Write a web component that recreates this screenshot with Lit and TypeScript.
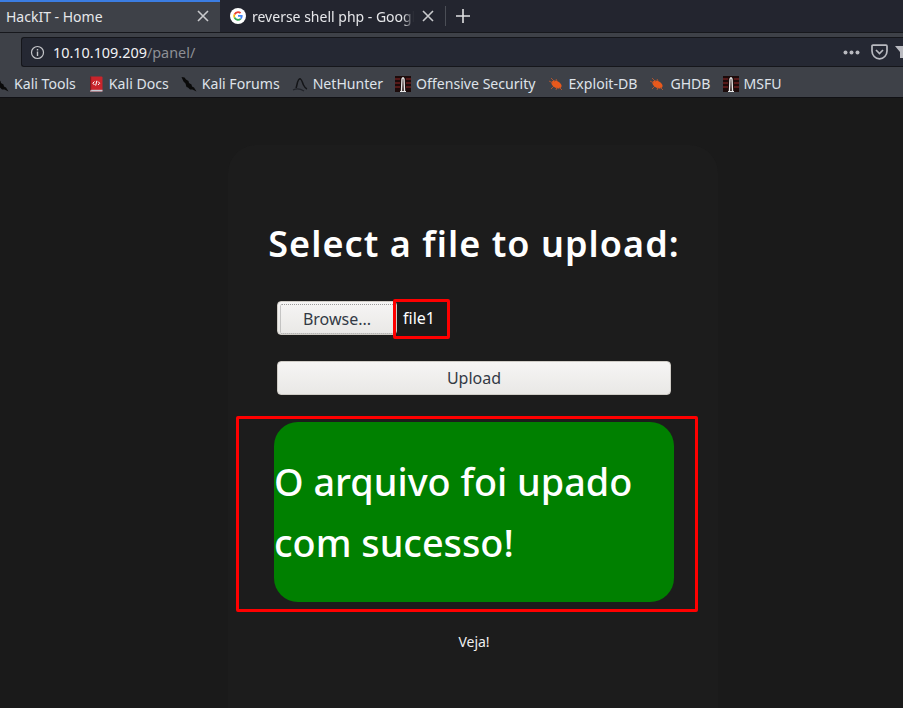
import { LitElement, html, css, svg } from "lit";
import { customElement } from "lit/decorators.js";

const dragon = svg`<path d="M0.5 1 L3.5 1.5 L5 3.5 L7.5 5 L8 7 L10.5 8.5 L11 10.5 L13 11.5 L15.5 15.5 L11.5 13.5 L9 13.5 L7 11.5 L5.5 11 L4.5 7.5 L2.5 5.5 Z" fill="#0a0a0a"/>`;
const book = svg`<rect x="2" y="0.5" width="12.5" height="15" rx="1" fill="#c9242b"/><rect x="2" y="13.8" width="12.5" height="1.7" fill="#c7ccd6"/><rect x="2" y="0.5" width="1.2" height="14" fill="#7d1a20"/><path d="M6.5 5.5 L4.8 7.2 L6.5 9 M10 5.5 L11.7 7.2 L10 9 M8.8 4.8 L7.7 9.6" stroke="#fff" stroke-width="1" fill="none"/>`;
const net = svg`<path d="M4 12 C5 10 5 7 6 5 C6.5 3.5 7.5 2.5 8.5 3 C10 4 10.5 7 11.5 9 C12.5 11 13.5 12.5 15 13" stroke="#141518" stroke-width="1.5" fill="none"/><path d="M1 14 C4 12.5 8 12.5 12 15" stroke="#22242a" stroke-width="1.3" fill="none"/>`;
const offsec = svg`<rect width="16" height="16" fill="#1c0b0b"/><path d="M0 3 H5 M11 3 H16 M0 7 H5 M11 7 H16 M0 11 H5 M11 11 H16" stroke="#6a1f1f" stroke-width="1.4"/><path d="M6.5 15 L7 3 Q8 0.5 9 3 L9.5 15" stroke="#e8e8e8" stroke-width="1.4" fill="none"/><path d="M5 15.5 H11" stroke="#e8e8e8"/>`;
const bug = svg`<ellipse cx="8.5" cy="8.5" rx="5.5" ry="3.4" transform="rotate(28 8.5 8.5)" fill="#e9591c"/><path d="M1 5 L5 7 M3 2 L7 6 M8 3 L9 5 M3 13 L6 10 M8 14 L9 11 M14 14 L11 11" stroke="#b9562d" stroke-width="0.9"/>`;

const marks = [
  { icon: dragon, label: "Kali Tools" },
  { icon: book, label: "Kali Docs" },
  { icon: dragon, label: "Kali Forums" },
  { icon: net, label: "NetHunter" },
  { icon: offsec, label: "Offensive Security" },
  { icon: bug, label: "Exploit-DB" },
  { icon: bug, label: "GHDB" },
  { icon: offsec, label: "MSFU" },
];

@customElement("app-root")
export class AppRoot extends LitElement {
  static styles = css`
    :host {
      display: flex;
      flex-direction: column;
      position: relative;
      width: 903px;
      height: 708px;
      overflow: hidden;
      background: #1a1a1a;
      font-family: "Noto Sans", "Open Sans", sans-serif;
    }
    .tabs {
      display: flex;
      align-items: stretch;
      height: 32px;
      flex: none;
      background: #23252f;
      color: #e6e7ea;
      font-size: 14px;
    }
    .tab {
      width: 220px;
      display: flex;
      align-items: center;
      flex: none;
      box-sizing: border-box;
      white-space: nowrap;
      overflow: hidden;
    }
    .tab.active {
      background: #3e4148;
      border-top: 2px solid #3b7de2;
      padding: 0 0 2px 6px;
    }
    .tab.other {
      padding: 0 0 0 10px;
      gap: 6px;
      width: 225px;
    }
    .label {
      flex: 1;
      min-width: 0;
      overflow: hidden;
    }
    .tab.other .label {
      -webkit-mask-image: linear-gradient(to right, #000 93%, transparent 100%);
      mask-image: linear-gradient(to right, #000 93%, transparent 100%);
    }
    .x {
      width: 16px;
      height: 16px;
      flex: none;
      margin-right: 9px;
    }
    .sep {
      width: 1px;
      height: 20px;
      align-self: center;
      background: #4b4e56;
      flex: none;
    }
    .plus {
      width: 14px;
      height: 14px;
      align-self: center;
      margin-left: 10px;
      flex: none;
    }
    .toolbar {
      flex: none;
      height: 35px;
      box-sizing: border-box;
      border-top: 1px solid #17181d;
      background: #3e4148;
      padding: 4px 0 0 21px;
      display: flex;
    }
    .url {
      flex: 1;
      display: flex;
      align-items: center;
      box-sizing: border-box;
      height: 30px;
      background: #252833;
      border: 1px solid #15161b;
      border-right: none;
      border-radius: 3px 0 0 3px;
      padding: 0 0 0 8px;
      font-size: 14.4px;
      color: #f2f2f4;
    }
    .info {
      width: 15px;
      height: 15px;
      flex: none;
      margin-right: 8px;
    }
    .path { color: #8d8f95; }
    .spacer { flex: 1; }
    .dots {
      width: 17px;
      height: 5px;
      flex: none;
      margin-right: 11px;
    }
    .pocket {
      width: 17px;
      height: 16px;
      flex: none;
      margin-right: 7px;
    }
    .funnel {
      width: 13px;
      height: 14px;
      flex: none;
      margin-right: -5px;
    }
    .marks {
      flex: none;
      height: 31px;
      box-sizing: border-box;
      background: #3e4148;
      border-bottom: 1px solid #101014;
      display: flex;
      align-items: center;
      gap: 12px;
      padding: 3px 0 0 0;
      margin-left: -7px;
      color: #dfe3ea;
      font-size: 14.1px;
    }
    .mark {
      display: flex;
      align-items: center;
      gap: 5px;
      white-space: nowrap;
    }
    .mark svg {
      width: 16px;
      height: 16px;
      flex: none;
    }
    main {
      flex: 1;
      display: flex;
      padding: 47px 0 0 228px;
      min-height: 0;
    }
    .card {
      width: 490px;
      background: #1c1c1c;
      border-radius: 28px 28px 0 0;
      display: flex;
      flex-direction: column;
      align-items: center;
      color: #fff;
      box-sizing: border-box;
      padding: 73px 0 0 2px;
    }
    h1 {
      margin: 0;
      font-size: 36px;
      line-height: 52px;
      font-weight: 600;
      letter-spacing: 1.05px;
      white-space: nowrap;
    }
    form {
      width: 394px;
      margin-top: 31px;
      display: flex;
      flex-direction: column;
      gap: 26px;
    }
    .file {
      display: flex;
      align-items: center;
      gap: 6px;
      height: 34px;
      font-size: 16px;
    }
    button {
      font: inherit;
      font-size: 16px;
      color: #333a45;
      background: linear-gradient(#f6f5f4, #e9e8e6);
      border: 1px solid #cfccc6;
      border-radius: 4px;
      height: 34px;
      padding: 0;
      box-sizing: border-box;
      display: block;
    }
    .browse {
      width: 120px;
      flex: none;
    }
    .browse span {
      display: flex;
      align-items: center;
      justify-content: center;
      margin: 2px;
      height: 28px;
      border: 1px dotted #9a9a9a;
      border-radius: 2px;
    }
    .upload { width: 394px; }
    .msg {
      width: 400px;
      height: 180px;
      margin-top: 27px;
      box-sizing: border-box;
      background: #008000;
      border-radius: 24px;
      padding: 29px 0 0 0;
      font-size: 37.8px;
      line-height: 61px;
      font-weight: 500;
    }
    .veja {
      margin-top: 30px;
      font-size: 14px;
      line-height: 19px;
      color: #f0f0f0;
    }
    .redbox {
      position: absolute;
      box-sizing: border-box;
      border: 3px solid #ff0000;
      border-radius: 2px;
      pointer-events: none;
    }
    .r1 { left: 393px; top: 299px; width: 57px; height: 40px; }
    .r2 { left: 236px; top: 416px; width: 462px; height: 196px; }
  `;

  render() {
    const x = html`<svg class="x" viewBox="0 0 16 16"><path d="M3 3 L13 13 M13 3 L3 13" stroke="#c9cacd" stroke-width="1.6"/></svg>`;
    return html`
      <div class="tabs">
        <div class="tab active"><span class="label">HackIT - Home</span>${x}</div>
        <div class="tab other">
          <svg width="16" height="16" viewBox="0 0 16 16" style="flex:none">
            <circle cx="8" cy="8" r="8" fill="#fff"/>
            <path d="M8 3.3 A4.7 4.7 0 0 1 11.2 4.5 L9.9 5.8 A3 3 0 0 0 5.2 7 L3.7 5.9 A4.7 4.7 0 0 1 8 3.3Z" fill="#ea4335"/>
            <path d="M3.7 5.9 L5.2 7 A3 3 0 0 0 5.2 9 L3.7 10.1 A4.7 4.7 0 0 1 3.7 5.9Z" fill="#fbbc05"/>
            <path d="M3.7 10.1 L5.2 9 A3 3 0 0 0 10 10.2 L11.4 11.3 A4.7 4.7 0 0 1 3.7 10.1Z" fill="#34a853"/>
            <path d="M8 7 H12.6 A4.7 4.7 0 0 1 11.4 11.3 L10 10.2 A3 3 0 0 0 10.8 8.8 H8Z" fill="#4285f4"/>
          </svg>
          <span class="label">reverse shell php - Google</span>${x}
        </div>
        <div class="sep"></div>
        <svg class="plus" viewBox="0 0 14 14"><path d="M7 0 V14 M0 7 H14" stroke="#e0e0e2" stroke-width="1.6"/></svg>
      </div>
      <div class="toolbar">
        <div class="url">
          <svg class="info" viewBox="0 0 15 15"><circle cx="7.5" cy="7.5" r="6" fill="none" stroke="#c4c5c9" stroke-width="1.2"/><path d="M7.5 6.6 V11 M7.5 4 V5.4" stroke="#c4c5c9" stroke-width="1.4"/></svg>
          <span>10.10.109.209</span><span class="path">/panel/</span>
          <span class="spacer"></span>
          <svg class="dots" viewBox="0 0 17 5"><circle cx="2.5" cy="2.5" r="2" fill="#b9bac0"/><circle cx="8.5" cy="2.5" r="2" fill="#b9bac0"/><circle cx="14.5" cy="2.5" r="2" fill="#b9bac0"/></svg>
          <svg class="pocket" viewBox="0 0 17 16"><path d="M2 1.2 H15 Q16 1.2 16 2.2 V7 A7.5 7.8 0 0 1 1 7 V2.2 Q1 1.2 2 1.2Z" fill="none" stroke="#b9bac0" stroke-width="1.7"/><path d="M5 6 L8.5 9.5 L12 6" fill="none" stroke="#b9bac0" stroke-width="1.7"/></svg>
          <svg class="funnel" viewBox="0 0 13 14"><path d="M0 1 H13 L8 7 V13 H5 V7Z" fill="#b9bac0"/></svg>
        </div>
      </div>
      <div class="marks">
        ${marks.map(
          (m) => html`<div class="mark"><svg viewBox="0 0 16 16">${m.icon}</svg><span>${m.label}</span></div>`
        )}
      </div>
      <main>
        <div class="card">
          <h1>Select a file to upload:</h1>
          <form>
            <div class="file">
              <button type="button" class="browse"><span>Browse...</span></button>
              <span>file1</span>
            </div>
            <button type="button" class="upload">Upload</button>
          </form>
          <div class="msg">O arquivo foi upado com sucesso!</div>
          <div class="veja">Veja!</div>
        </div>
      </main>
      <div class="redbox r1"></div>
      <div class="redbox r2"></div>
    `;
  }
}
